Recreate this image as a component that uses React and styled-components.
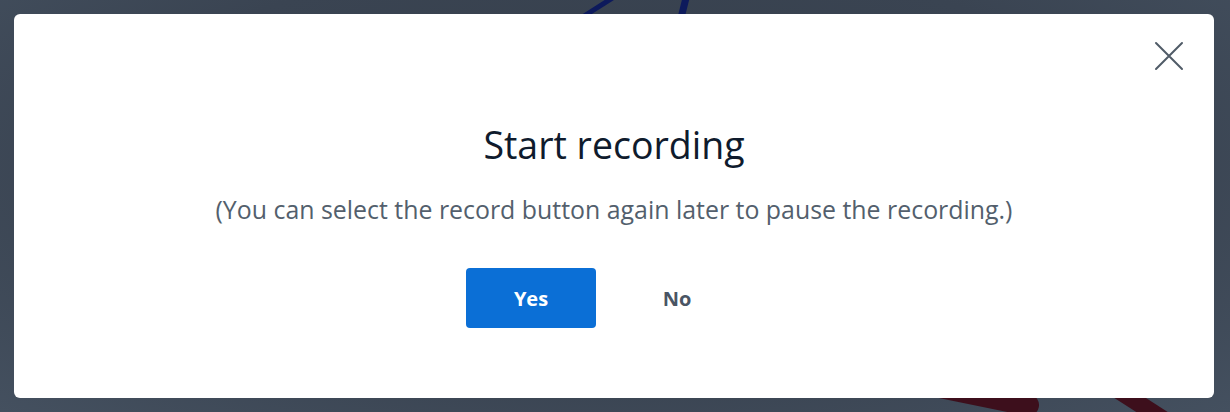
import React from "react";
import styled, { createGlobalStyle } from "styled-components";

const GlobalStyle = createGlobalStyle`
  html, body {
    margin: 0;
    padding: 0;
    width: 100%;
    height: 100%;
    overflow: hidden;
  }
  body {
    font-family: "Open Sans", "Noto Sans", sans-serif;
  }
`;

const Backdrop = styled.div`
  position: relative;
  width: 1230px;
  height: 412px;
  box-sizing: border-box;
  padding: 14px 16px 14px 14px;
  background: radial-gradient(ellipse at 50% 40%, #343d49 0%, #3a4452 60%, #44505f 100%);
  display: flex;
`;

const Strokes = styled.svg`
  position: absolute;
  inset: 0;
  width: 100%;
  height: 100%;
`;

const Dialog = styled.div`
  position: relative;
  flex: 1;
  background: #ffffff;
  border-radius: 6px;
  display: flex;
  flex-direction: column;
  align-items: center;
  padding-top: 107px;
  box-sizing: border-box;
`;

const CloseButton = styled.button`
  position: absolute;
  top: 26px;
  right: 29px;
  width: 32px;
  height: 32px;
  padding: 0;
  border: 0;
  background: transparent;
  display: flex;
  align-items: center;
  justify-content: center;
  cursor: pointer;
`;

const Title = styled.h2`
  margin: 0;
  font-size: 37.5px;
  font-weight: 400;
  line-height: 48px;
  color: #0f1b2d;
`;

const Message = styled.p`
  margin: 24px 0 0;
  font-size: 24.9px;
  line-height: 32px;
  color: #535f6d;
`;

const Actions = styled.div`
  margin-top: 43px;
  display: flex;
  gap: 16px;
  padding-right: 20px;
`;

const Button = styled.button`
  width: 130px;
  height: 60px;
  border: 0;
  border-radius: 4px;
  font-family: inherit;
  font-size: 20px;
  font-weight: 700;
  cursor: pointer;
  background: ${(p) => (p.$primary ? "#0b6fd6" : "transparent")};
  color: ${(p) => (p.$primary ? "#ffffff" : "#4a5564")};
`;

export default function App() {
  return (
    <>
      <GlobalStyle />
      <Backdrop>
        <Strokes viewBox="0 0 1230 412" preserveAspectRatio="none">
          <line x1="570" y1="25" x2="625" y2="-10" stroke="#0d1a5c" strokeWidth="5" />
          <line x1="678" y1="30" x2="688" y2="-10" stroke="#0d1a5c" strokeWidth="7" />
          <line x1="930" y1="385" x2="1028" y2="405" stroke="#3d0f1c" strokeWidth="22" strokeLinecap="round" />
          <line x1="1110" y1="385" x2="1180" y2="430" stroke="#3d0f1c" strokeWidth="17" />
        </Strokes>
        <Dialog>
          <CloseButton aria-label="Close">
            <svg width="30" height="30" viewBox="0 0 30 30">
              <path d="M2 2 L28 28 M28 2 L2 28" stroke="#505b67" strokeWidth="2" strokeLinecap="round" />
            </svg>
          </CloseButton>
          <Title>Start recording</Title>
          <Message>(You can select the record button again later to pause the recording.)</Message>
          <Actions>
            <Button $primary>Yes</Button>
            <Button>No</Button>
          </Actions>
        </Dialog>
      </Backdrop>
    </>
  );
}
